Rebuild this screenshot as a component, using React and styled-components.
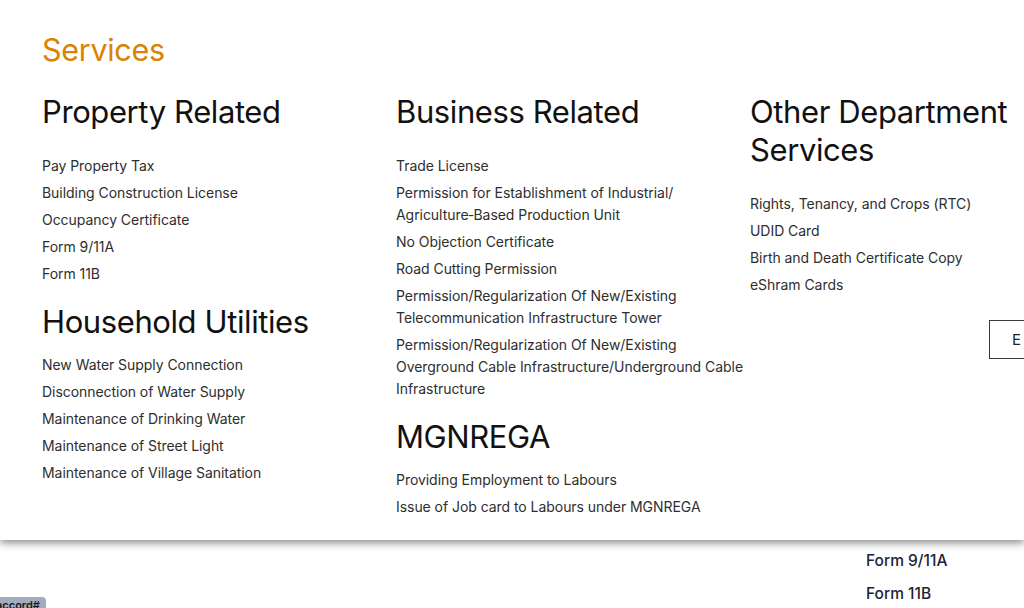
import React from "react";
import styled, { createGlobalStyle } from "styled-components";

const GlobalStyle = createGlobalStyle`
  html, body {
    margin: 0;
    padding: 0;
    background: #ffffff;
  }

  body {
    font-family: Inter, "Noto Sans", "Liberation Sans", sans-serif;
  }
`;

const columns = [
  [
    {
      title: "Property Related",
      items: [
        "Pay Property Tax",
        "Building Construction License",
        "Occupancy Certificate",
        "Form 9/11A",
        "Form 11B",
      ],
    },
    {
      title: "Household Utilities",
      items: [
        "New Water Supply Connection",
        "Disconnection of Water Supply",
        "Maintenance of Drinking Water",
        "Maintenance of Street Light",
        "Maintenance of Village Sanitation",
      ],
    },
  ],
  [
    {
      title: "Business Related",
      items: [
        "Trade License",
        "Permission for Establishment of Industrial/ Agriculture\u2011Based Production Unit",
        "No Objection Certificate",
        "Road Cutting Permission",
        "Permission/Regularization Of New/Existing Telecommunication Infrastructure Tower",
        "Permission/Regularization Of New/Existing Overground Cable Infrastructure/Underground Cable Infrastructure",
      ],
    },
    {
      title: "MGNREGA",
      items: [
        "Providing Employment to Labours",
        "Issue of Job card to Labours under MGNREGA",
      ],
    },
  ],
  [
    {
      title: "Other Department Services",
      items: [
        "Rights, Tenancy, and Crops (RTC)",
        "UDID Card",
        "Birth and Death Certificate Copy",
        "eShram Cards",
      ],
    },
  ],
];

const App = () => {
  return (
    <Page>
      <GlobalStyle />
      <MegaMenu>
        <MenuTitle>Services</MenuTitle>
        <Columns>
          {columns.map((groups, ci) => (
            <Column key={ci}>
              {groups.map((group, gi) => (
                <Group key={group.title} $first={gi === 0}>
                  <GroupTitle $first={gi === 0}>{group.title}</GroupTitle>
                  <LinkList>
                    {group.items.map((item) => (
                      <LinkItem key={item}>
                        <MenuLink href="#">{item}</MenuLink>
                      </LinkItem>
                    ))}
                  </LinkList>
                </Group>
              ))}
            </Column>
          ))}
        </Columns>
        <SideButton>E</SideButton>
      </MegaMenu>
      <Behind>
        <BehindLink href="#">Form 9/11A</BehindLink>
        <BehindLink href="#">Form 11B</BehindLink>
      </Behind>
      <StatusBubble>accord#</StatusBubble>
    </Page>
  );
};

const Page = styled.div`
  position: relative;
  width: 1024px;
  height: 608px;
  overflow: hidden;
  background: #ffffff;
`;

const MegaMenu = styled.nav`
  position: relative;
  z-index: 2;
  height: 540px;
  box-sizing: border-box;
  padding: 30px 0 0 42px;
  background: #ffffff;
  box-shadow: 0 3px 8px rgba(0, 0, 0, 0.45);
`;

const MenuTitle = styled.h2`
  margin: 0 0 23px;
  font-size: 30.5px;
  line-height: 40px;
  font-weight: 400;
  color: #d98300;
  letter-spacing: -0.3px;
`;

const Columns = styled.div`
  display: grid;
  grid-template-columns: repeat(3, 354px);
`;

const Column = styled.div`
  display: flex;
  flex-direction: column;
`;

const Group = styled.section`
  margin-top: ${(p) => (p.$first ? "0" : "18px")};
`;

const GroupTitle = styled.h3`
  margin: 0 0 ${(p) => (p.$first ? "24px" : "13px")};
  padding-right: 20px;
  font-size: 31px;
  line-height: 38px;
  font-weight: 400;
  color: #111111;
  letter-spacing: -0.4px;
`;

const LinkList = styled.ul`
  list-style: none;
  margin: 0;
  padding: 0;
  display: flex;
  flex-direction: column;
  gap: 5px;
`;

const LinkItem = styled.li`
  font-size: 14px;
  line-height: 22px;
  letter-spacing: -0.05px;
`;

const MenuLink = styled.a`
  color: #2e2e2e;
  text-decoration: none;
`;

const SideButton = styled.button`
  position: absolute;
  left: 989px;
  top: 320px;
  width: 80px;
  height: 39px;
  box-sizing: border-box;
  padding: 0 0 0 22px;
  border: 1px solid #3a3a3a;
  background: #ffffff;
  text-align: left;
  font-family: inherit;
  font-size: 15px;
  color: #222222;
`;

const Behind = styled.div`
  display: flex;
  flex-direction: column;
  gap: 11px;
  padding: 10px 0 0 866px;
`;

const BehindLink = styled.a`
  font-size: 15.5px;
  line-height: 22px;
  font-weight: 500;
  color: #1b2336;
  text-decoration: none;
  letter-spacing: 0;
`;

const StatusBubble = styled.div`
  position: absolute;
  left: -10px;
  bottom: -9px;
  height: 20px;
  padding: 0 6px;
  border-top-right-radius: 4px;
  background: #a3abbe;
  font-size: 11px;
  line-height: 16px;
  font-weight: 600;
  color: #1a1a1a;
`;

export default App;
